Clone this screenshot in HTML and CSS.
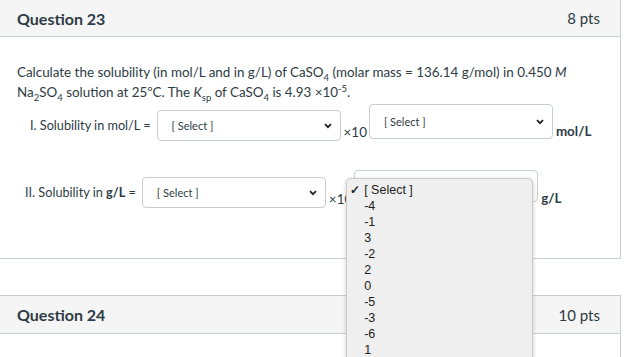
FILE: index.html
```html
<!DOCTYPE html>
<html lang="en">
<head>
    <meta charset="UTF-8">
    <meta name="viewport" content="width=device-width, initial-scale=1.0">
    <title>Quiz - Question 23</title>
    <link rel="stylesheet" href="styles.css">
</head>
<body>
    <div class="question">
        <div class="q-header">
            <span class="q-title">Question 23</span>
            <span class="q-pts">8 pts</span>
        </div>
        <div class="q-body">
            <p class="q-text">Calculate the solubility (in mol/L and in g/L) of CaSO<sub>4</sub> (molar mass = 136.14 g/mol) in 0.450 <i>M</i> Na<sub>2</sub>SO<sub>4</sub> solution at 25ºC. The <i>K</i><sub>sp</sub> of CaSO<sub>4</sub> is 4.93 ×10<sup>-5</sup>.</p>

            <div class="answer-row row-one">
                <span class="label">I. Solubility in mol/L =</span>
                <div class="select"><span>[ Select ]</span><svg class="chev" width="8" height="6" viewBox="0 0 8 6"><path d="M1 1.2l3 3 3-3" fill="none" stroke="#222" stroke-width="1.8"/></svg></div>
                <span class="times">×10</span>
                <div class="select exp"><span>[ Select ]</span><svg class="chev" width="8" height="6" viewBox="0 0 8 6"><path d="M1 1.2l3 3 3-3" fill="none" stroke="#222" stroke-width="1.8"/></svg></div>
                <b class="unit">mol/L</b>
            </div>

            <div class="answer-row row-two">
                <span class="label">II. Solubility in <b>g/L</b> =</span>
                <div class="select"><span>[ Select ]</span><svg class="chev" width="8" height="6" viewBox="0 0 8 6"><path d="M1 1.2l3 3 3-3" fill="none" stroke="#222" stroke-width="1.8"/></svg></div>
                <span class="times">×10</span>
                <div class="select exp open"><span>[ Select ]</span><svg class="chev" width="8" height="6" viewBox="0 0 8 6"><path d="M1 1.2l3 3 3-3" fill="none" stroke="#222" stroke-width="1.8"/></svg>
                    <ul class="menu">
                        <li class="checked">[ Select ]</li>
                        <li>-4</li>
                        <li>-1</li>
                        <li>3</li>
                        <li>-2</li>
                        <li>2</li>
                        <li>0</li>
                        <li>-5</li>
                        <li>-3</li>
                        <li>-6</li>
                        <li>1</li>
                    </ul>
                </div>
                <b class="unit">g/L</b>
            </div>
        </div>
    </div>

    <div class="question second">
        <div class="q-header">
            <span class="q-title">Question 24</span>
            <span class="q-pts">10 pts</span>
        </div>
        <div class="q-body short"></div>
    </div>
</body>
</html>
```

FILE: styles.css
```css
body { margin: 0; font-family: Lato, "Open Sans", sans-serif; color: #2d3b45; overflow: hidden; height: 357px; }
.question { width: 620px; border: 1px solid #c7cdd1; border-left: none; border-top: none; }
.question.second { border-top: 1px solid #c7cdd1; margin-top: 36px; }
.q-header { height: 36px; background: #f5f5f5; border-bottom: 1px solid #c7cdd1; display: flex; justify-content: space-between; align-items: center; padding: 0 20px 0 17px; }
.second .q-header { height: 37px; }
.q-title { font-size: 16px; font-weight: bold; }
.q-pts { font-size: 15px; }
.q-body { height: 221px; padding: 0 17px; font-size: 13.4px; }
.q-body.short { height: 30px; }
.q-text { margin: 0; padding-top: 25px; line-height: 20px; }
sub, sup { font-size: 9.5px; line-height: 0; }
.answer-row { display: flex; align-items: flex-end; height: 33px; white-space: nowrap; }
.row-one { margin-top: 6px; padding-left: 13px; }
.row-two { margin-top: 34px; padding-left: 8px; }
.label { margin-right: 6px; align-self: center; flex-shrink: 0; font-size: 12.7px; }
.select { position: relative; flex-shrink: 0; width: 184px; height: 31px; border: 1px solid #c7cdd1; border-radius: 4px; background: #fff; display: flex; align-items: center; justify-content: space-between; padding: 0 8px 0 14px; box-sizing: border-box; font-size: 11px; }
.select.exp { align-self: flex-start; margin-top: -4px; height: 35px; }
.row-two .select.exp { height: 32px; margin-top: -5px; }
.times { margin: 0 2px 0 3px; padding-bottom: 1px; }
.unit { margin-left: 3px; padding-bottom: 2px; }
.menu { position: absolute; left: -9px; top: 7px; z-index: 2; width: 187px; height: 190px; margin: 0; padding: 3px 0 0; list-style: none; background: #efefef; border: 1px solid #cbcbcb; border-radius: 5px 5px 0 0; box-shadow: 0 1px 4px rgba(0,0,0,0.2); box-sizing: border-box; font-family: "Liberation Sans", Arial, sans-serif; font-size: 12.5px; color: #222; }
.menu li { height: 16px; line-height: 16px; padding-left: 17px; }
.menu li.checked { position: relative; }
.menu li.checked::before { content: "✓"; position: absolute; left: 3px; font-size: 12px; font-weight: bold; }
```
